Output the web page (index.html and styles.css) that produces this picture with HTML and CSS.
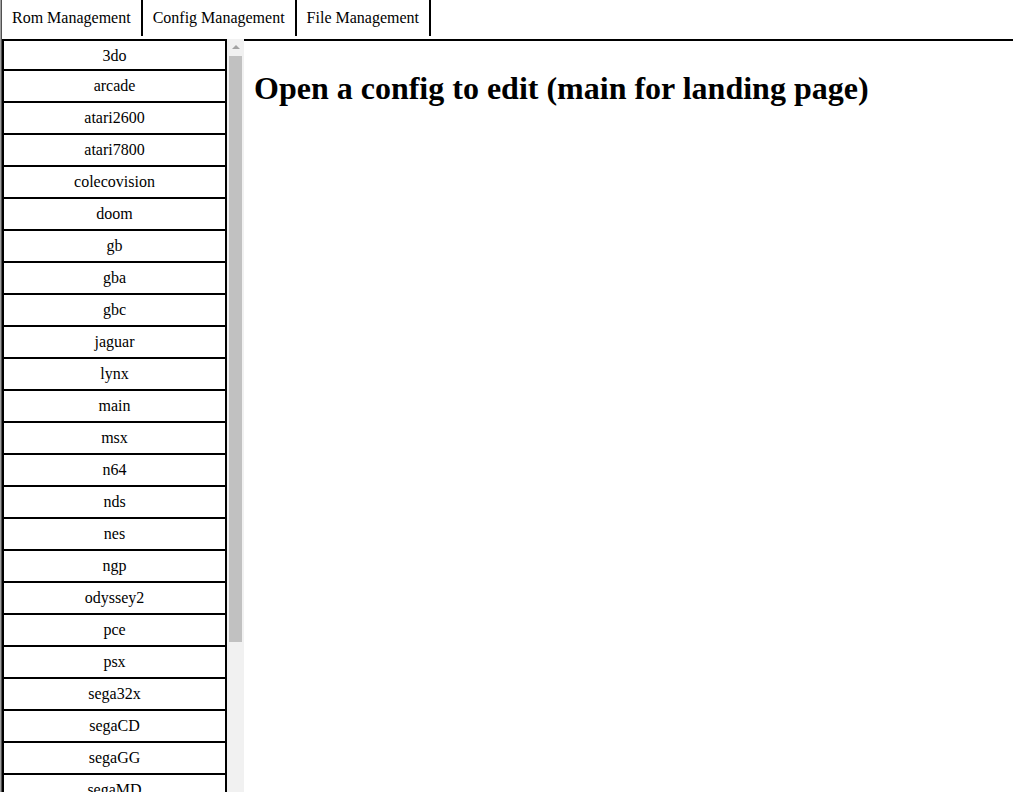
FILE: index.html
```html
<!DOCTYPE html>
<html>
<head>
<meta charset="utf-8">
<title>Config Management</title>
<link rel="stylesheet" href="styles.css">
</head>
<body>
<div class="frame">
  <div class="inner">
    <nav class="tabs">
      <div class="tab">Rom Management</div>
      <div class="tab">Config Management</div>
      <div class="tab">File Management</div>
    </nav>
    <div class="layout">
      <div class="sidebar">
        <div class="list">
          <div class="item">3do</div>
          <div class="item">arcade</div>
          <div class="item">atari2600</div>
          <div class="item">atari7800</div>
          <div class="item">colecovision</div>
          <div class="item">doom</div>
          <div class="item">gb</div>
          <div class="item">gba</div>
          <div class="item">gbc</div>
          <div class="item">jaguar</div>
          <div class="item">lynx</div>
          <div class="item">main</div>
          <div class="item">msx</div>
          <div class="item">n64</div>
          <div class="item">nds</div>
          <div class="item">nes</div>
          <div class="item">ngp</div>
          <div class="item">odyssey2</div>
          <div class="item">pce</div>
          <div class="item">psx</div>
          <div class="item">sega32x</div>
          <div class="item">segaCD</div>
          <div class="item">segaGG</div>
          <div class="item">segaMD</div>
          <div class="item">segaMS</div>
          <div class="item">segaSaturn</div>
          <div class="item">sg1000</div>
          <div class="item">snes</div>
          <div class="item">vb</div>
          <div class="item">vectrex</div>
          <div class="item">wswan</div>
          <div class="item">wswanc</div>
        </div>
        <div class="scrollbar" aria-hidden="true">
          <div class="sb-button"><span class="sb-arrow"></span></div>
          <div class="sb-thumb"></div>
        </div>
      </div>
      <main class="content">
        <h1 class="title">Open a config to edit (main for landing page)</h1>
      </main>
    </div>
  </div>
</div>
</body>
</html>
```
FILE: styles.css
```css
html, body {
  margin: 0;
  padding: 0;
  height: 100%;
  overflow: hidden;
  background: #fff;
}
body {
  font-family: "Liberation Serif", "Times New Roman", serif;
  font-size: 16px;
  color: #000;
}
.frame {
  border-left: 1px solid #a0a0a0;
  height: 100vh;
}
.inner {
  border-left: 1px solid #505050;
  height: 100%;
}
.tabs {
  display: flex;
  height: 39px;
  align-items: flex-start;
}
.tab {
  height: 36px;
  box-sizing: border-box;
  padding: 9px 10px 0 10px;
  border-right: 2px solid #000;
  line-height: 18px;
  white-space: nowrap;
}
.layout {
  display: flex;
  align-items: flex-start;
}
.sidebar {
  display: flex;
  height: 100vh;
  flex: none;
}
.list {
  width: 225px;
  overflow: hidden;
}
.scrollbar {
  width: 17px;
  background: #f1f1f1;
  display: flex;
  flex-direction: column;
}
.sb-button {
  height: 17px;
  display: flex;
  align-items: center;
  justify-content: center;
}
.sb-arrow {
  width: 0;
  height: 0;
  border-left: 4px solid transparent;
  border-right: 4px solid transparent;
  border-bottom: 4px solid #a3a3a3;
  margin-top: -2px;
}
.sb-thumb {
  height: 586px;
  margin: 0 2px;
  background: #c1c1c1;
}
.item {
  width: 225px;
  box-sizing: border-box;
  height: 32px;
  border: 2px solid #000;
  border-top: none;
  text-align: center;
  line-height: 30px;
}
.item:first-child {
  border-top: 2px solid #000;
}
.content {
  flex: 1;
  border-top: 2px solid #000;
  padding: 8px 10px;
}
.title {
  font-size: 32px;
  font-weight: bold;
  margin: 21px 0;
}
```
